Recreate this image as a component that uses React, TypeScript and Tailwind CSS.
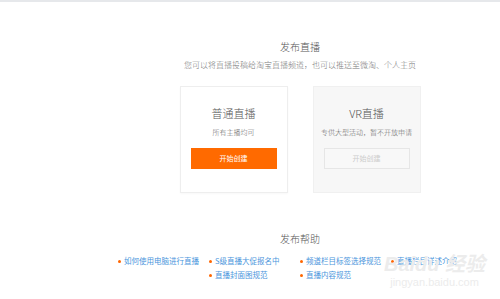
const HELP_COLUMNS = [
  ['如何使用电脑进行直播'],
  ['S级直播大促报名中', '直播封面图规范'],
  ['频道栏目标签选择规范', '直播内容规范'],
  ['直播栏目详述介绍'],
]

export default function App() {
  return (
    <div
      className="relative flex w-[500px] h-[299px] overflow-hidden bg-white border-t-2 border-[#e6e8eb]"
      style={{ fontFamily: '"Noto Sans CJK SC", "Noto Sans", sans-serif' }}
    >
      <div className="w-[100px] shrink-0" />
      <main className="flex-1 flex flex-col items-center">
        <h1 className="mt-[38px] text-[10px] leading-[14px] font-light text-[#555]">发布直播</h1>
        <p className="mt-[5px] text-[8px] leading-[12px] font-light text-[#777]">
          您可以将直播投稿给淘宝直播频道，也可以推送至微淘、个人主页
        </p>

        <div className="mt-[15px] flex gap-[25px]">
          <div className="w-[108px] h-[107px] flex flex-col items-center bg-white border border-[#eeeeee] shadow-[0_1px_2px_rgba(0,0,0,0.03)]">
            <div className="mt-[19px] text-[11px] leading-[14px] font-light text-[#555]">普通直播</div>
            <div className="mt-[7px] text-[7px] leading-[10px] font-light text-[#666]">所有主播均可</div>
            <button className="mt-[11px] w-[86px] h-[21px] bg-[#ff6a00] text-white text-[7px] leading-[21px]">
              开始创建
            </button>
          </div>
          <div className="w-[108px] h-[107px] flex flex-col items-center bg-[#f7f7f7] border border-[#f0f0f0]">
            <div className="mt-[19px] text-[11px] leading-[14px] font-light text-[#555]">VR直播</div>
            <div className="mt-[7px] text-[7px] leading-[10px] font-light text-[#666]">专供大型活动，暂不开放申请</div>
            <button className="mt-[11px] w-[86px] h-[21px] bg-[#f8f8f8] border border-[#e6e6e6] text-[#cccccc] text-[7px] leading-[19px]">
              开始创建
            </button>
          </div>
        </div>

        <h2 className="mt-[39px] text-[10px] leading-[14px] font-light text-[#555]">发布帮助</h2>
        <div className="mt-[8px] w-[364px] grid grid-cols-4">
          {HELP_COLUMNS.map((col, i) => (
            <ul key={i} className="flex flex-col">
              {col.map((t) => (
                <li key={t} className="flex items-center gap-[3px] h-[14px] text-[7.5px] text-[#4a95dc] whitespace-nowrap">
                  <span className="w-[3px] h-[3px] rounded-full bg-[#ff6600] shrink-0" />
                  {t}
                </li>
              ))}
            </ul>
          ))}
        </div>
      </main>

      <div className="absolute left-[384px] top-[250px] flex flex-col items-center text-[#ececec] pointer-events-none">
        <div className="text-[20px] leading-[24px] font-bold italic" style={{ fontFamily: '"Liberation Sans", "Noto Sans CJK SC", sans-serif' }}>
          Baidu 经验
        </div>
        <div className="text-[11px] leading-[12px]" style={{ fontFamily: '"Liberation Sans", sans-serif' }}>
          jingyan.baidu.com
        </div>
      </div>
    </div>
  )
}
